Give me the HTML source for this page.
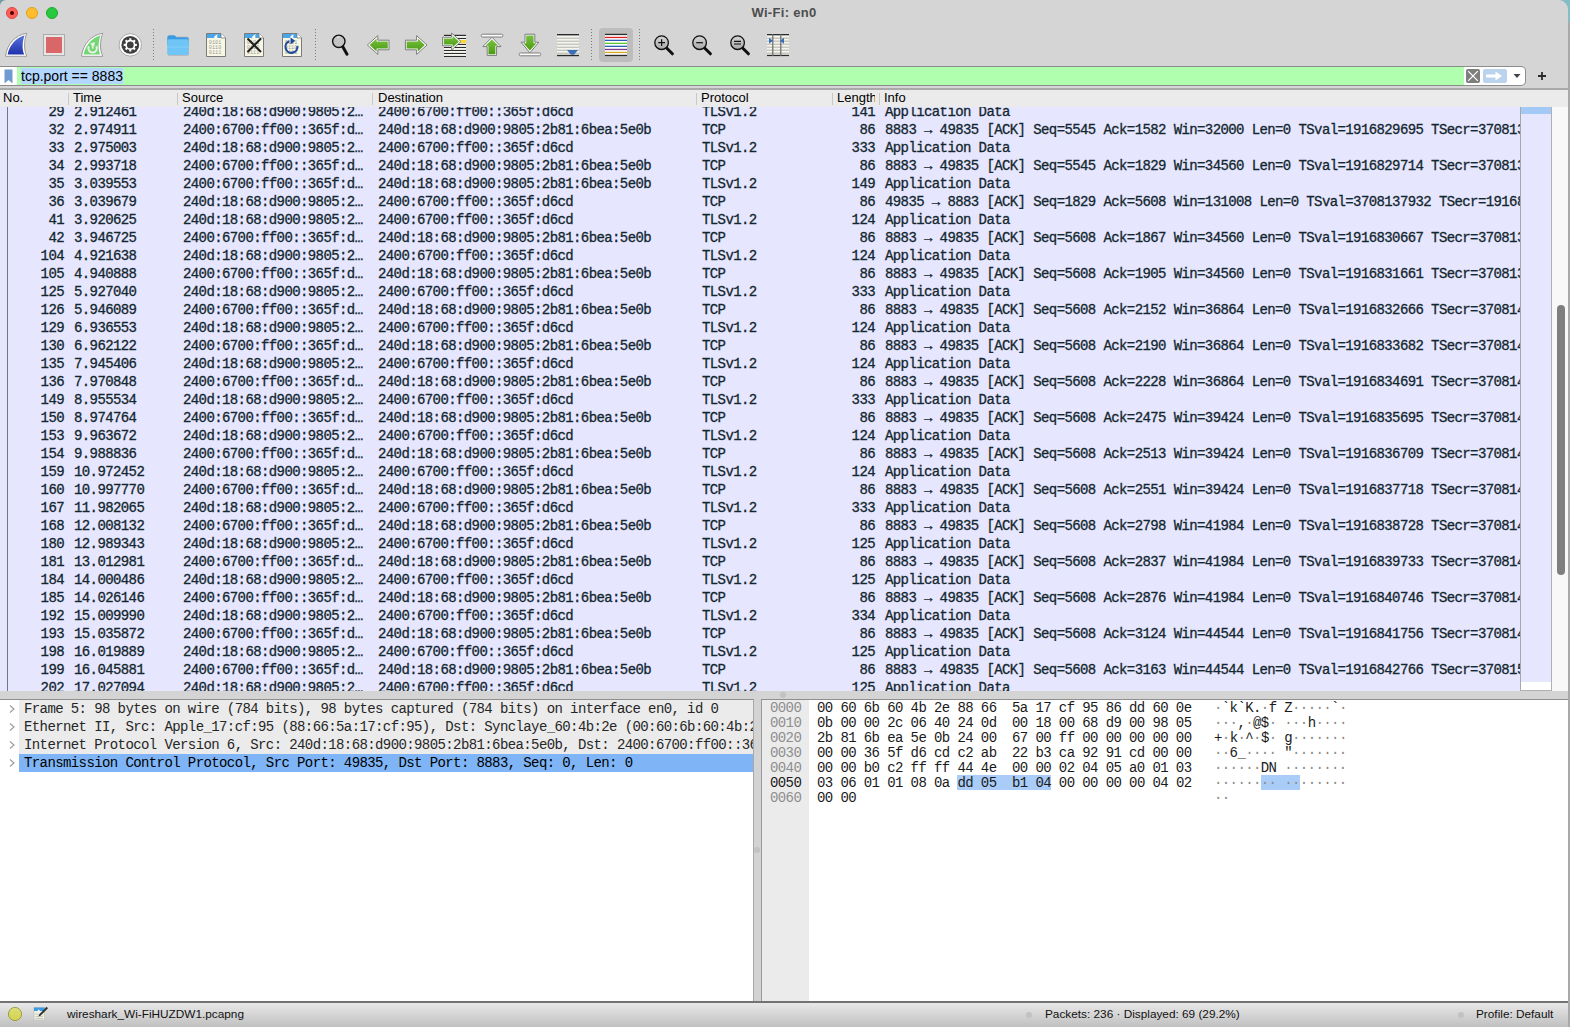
<!DOCTYPE html>
<html><head><meta charset="utf-8">
<style>
*{margin:0;padding:0;box-sizing:border-box}
html,body{width:1570px;height:1027px;overflow:hidden;background:#d5d5d5;font-family:"Liberation Sans",sans-serif}
.abs{position:absolute}
#title{position:absolute;left:0;top:0;width:1570px;height:28px;text-align:center;font-weight:bold;font-size:13px;letter-spacing:0.3px;color:#4d4d4d;line-height:26px;padding-right:2px}
.tl{position:absolute;top:7px;width:12px;height:12px;border-radius:50%}
#tb svg{position:absolute}
.sep{position:absolute;top:29px;width:2px;height:32px;background-image:linear-gradient(#8a8a8a 50%,transparent 50%);background-size:2px 4px;width:1px}
#filter{position:absolute;left:0;top:66px;width:1526px;height:20px;border:1px solid #8c8c8c;border-left:none;border-radius:0 5px 5px 0;background:#fff;overflow:hidden}
#fgreen{position:absolute;left:17px;top:0;width:1447px;height:18px;background:#afffaf}
#ftext{position:absolute;left:21px;top:1px;height:16px;background:#b3d7ff;font-size:14px;line-height:16px;color:#000;padding:0 0 0 0}
#sepline{position:absolute;left:0;top:88px;width:1569px;height:2px;background:#a9a9a9}
#hdr{position:absolute;left:0;top:90px;width:1568px;height:17px;background:#ebebeb;font-size:13px;color:#000}
#hdr span{position:absolute;top:0;line-height:16px}
#hdr i{position:absolute;top:3px;width:1px;height:12px;background:#c8c8c8}
#plist{position:absolute;left:0;top:107px;width:1520px;height:584px;overflow:hidden;background:#fff}
.r{position:absolute;left:0;width:1521px;height:18px;background:#e7e6ff;color:#12272e;font-family:"Liberation Mono",monospace;font-size:14px;letter-spacing:-0.6px;line-height:18px;white-space:pre}
.r span{position:absolute;top:2px;-webkit-text-stroke:0.3px #12272e}
.no{right:1457px;text-align:right}
.tm{left:74px}.sr{left:183px}.ds{left:378px}.pr{left:702px}
.ln{right:646px;text-align:right}
.in{left:885px}
#vline{position:absolute;left:7px;top:107px;width:1px;height:584px;background:#6e7a80}
#mini{position:absolute;left:1520px;top:107px;width:32px;height:584px;background:#fff;border-left:1px solid #a8a8a8;border-right:1px solid #b0b0b0;border-bottom:1px solid #b0b0b0}
#sb{position:absolute;left:1552px;top:107px;width:16px;height:584px;background:#f8f8f8}
#thumb{position:absolute;left:1557px;top:305px;width:8px;height:270px;border-radius:4px;background:#7f7f7f}
#split1{position:absolute;left:0;top:691px;width:1569px;height:8px;background:#d4d4d4}
#detail{position:absolute;left:0;top:699px;width:754px;height:302px;background:#fff;border-top:1px solid #8f8f8f;border-right:1px solid #a8a8a8;overflow:hidden}
.d{position:absolute;left:19px;width:740px;height:18px;background:#ebebeb;font-family:"Liberation Mono",monospace;font-size:14px;letter-spacing:-0.6px;line-height:19px;color:#262626;white-space:pre;padding-left:5px}
.d.sel{background:#7fb5f6;color:#000}
.arr{position:absolute;left:8px;width:8px;height:18px}
#split2{position:absolute;left:754px;top:699px;width:7px;height:302px;background:#d3d3d3}
#hex{position:absolute;left:761px;top:699px;width:808px;height:302px;background:#fff;border-top:1px solid #8f8f8f;border-left:1px solid #9a9a9a;overflow:hidden}
#off{position:absolute;left:0;top:0;width:47px;height:302px;background:#ebebeb}
.h{position:absolute;font-family:"Liberation Mono",monospace;font-size:14px;letter-spacing:-0.6px;line-height:15px;white-space:pre;color:#1a1a1a}
.ho{color:#8e8e8e}
.hl{background:#a9cdf8;display:inline-block;height:14px;line-height:15px;vertical-align:top;box-shadow:0 -1px 0 #a9cdf8}
.dt{font-weight:normal;color:#8c8c8c}
#status{position:absolute;left:0;top:1001px;width:1569px;height:26px;border-top:2px solid #737373;background:linear-gradient(#e8e8e8,#c0c0c0);font-size:12px;color:#111}
</style></head><body>
<div id="title">Wi-Fi: en0</div>
<div class="tl" style="left:6px;background:#fe5f57;border:1px solid #e2463f"><div style="position:absolute;left:3px;top:3px;width:4px;height:4px;border-radius:50%;background:#4d0000"></div></div>
<div class="tl" style="left:26px;background:#febc2e;border:1px solid #e1a116"></div>
<div class="tl" style="left:46px;background:#28c840;border:1px solid #1aab29"></div>

<div id="tb">
<svg style="position:absolute;left:0;top:0" width="800" height="64" viewBox="0 0 800 64">
<defs>
<linearGradient id="gb" x1="0" y1="0" x2="0" y2="1"><stop offset="0" stop-color="#5b72dc"/><stop offset="1" stop-color="#1d32aa"/></linearGradient>
<linearGradient id="gg" x1="0" y1="0" x2="0" y2="1"><stop offset="0" stop-color="#7ac143"/><stop offset="1" stop-color="#4a9a10"/></linearGradient>
<linearGradient id="gm" x1="0" y1="0" x2="0" y2="1"><stop offset="0" stop-color="#d6d6d6"/><stop offset="1" stop-color="#a8a8a8"/></linearGradient>
</defs>
<!-- 1 shark fin blue -->
<path d="M5.5 56.3C7 44 15 35.2 26.8 33.2C24 40 23.6 50 26.8 56.3Z" fill="#fff" stroke="#9a9a9a" stroke-width="1"/>
<path d="M7.6 54.6C9.6 45 16 38 24.6 35.3C22.2 42 21.9 49 24.2 54.6Z" fill="url(#gb)"/>
<!-- 2 stop -->
<rect x="43.5" y="34.5" width="21" height="21" fill="#e6e6e6" stroke="#ababab"/>
<rect x="46" y="37" width="16" height="16" fill="#d96767"/>
<!-- 3 restart fin -->
<path d="M81.5 56.3C83 44 91 35.2 102.8 33.2C100 40 99.6 50 102.8 56.3Z" fill="#fff" stroke="#9a9a9a" stroke-width="1"/>
<path d="M83.6 54.6C85.6 45 92 38 100.6 35.3C98.2 42 97.9 49 100.2 54.6Z" fill="#72d672"/>
<path d="M88.8 46.2A4.3 4.3 0 1 0 96.4 46.2" fill="none" stroke="#ebf0eb" stroke-width="2"/>
<path d="M92.7 48.6V44.2" stroke="#ebf0eb" stroke-width="1.8"/>
<path d="M89.8 43.8L94.8 42L94.2 46.6Z" fill="#ebf0eb"/>
<!-- 4 gear -->
<circle cx="130.3" cy="44.9" r="11.2" fill="#fff" stroke="#a0a0a0" stroke-width="0.9"/>
<circle cx="130.3" cy="44.9" r="8.9" fill="#3e3e3e"/>
<g fill="#fff" transform="translate(130.3 44.9)">
<circle r="5.1"/>
<rect x="-1" y="-6.6" width="2" height="13.2"/>
<rect x="-1" y="-6.6" width="2" height="13.2" transform="rotate(45)"/>
<rect x="-1" y="-6.6" width="2" height="13.2" transform="rotate(90)"/>
<rect x="-1" y="-6.6" width="2" height="13.2" transform="rotate(135)"/>
</g>
<circle cx="130.3" cy="44.9" r="3.4" fill="#3e3e3e"/>
<!-- separators -->
<g stroke="#7a7a7a" stroke-width="1" stroke-dasharray="1 2">
<line x1="153.5" y1="29" x2="153.5" y2="61"/>
<line x1="315.5" y1="29" x2="315.5" y2="61"/>
<line x1="591.5" y1="29" x2="591.5" y2="61"/>
<line x1="639.5" y1="29" x2="639.5" y2="61"/>
</g>
<!-- 5 folder -->
<rect x="167.5" y="36.6" width="21.5" height="19.4" rx="2" fill="#000" opacity="0.12"/>
<path d="M167.3 37.6Q167.3 35.3 169.6 35.3H174.4L176.6 37.3H186.7Q188.7 37.3 188.7 39.6V45H167.3Z" fill="#3b9be2"/>
<rect x="167.3" y="39.2" width="21.4" height="15.8" rx="1.8" fill="#6ec5f6"/>
<rect x="167.3" y="46.5" width="21.4" height="1" fill="#86d0f8"/>
<!-- 6,7,8 doc -->
<g id="doc">
<path d="M206.5 33.5H221L225.5 38V56.5H206.5Z" fill="#f7f7e4" stroke="#7a7a7a" stroke-width="1"/>
<path d="M207 34H220.8L224.9 38.1H207Z" fill="#4aa6e8"/>
<path d="M214 38C214.5 36 216 34.8 218 34.3C217 35.4 217 36.8 217.5 38Z" fill="#fff"/>
<path d="M221 33.5V38H225.5" fill="#fff" stroke="#7a7a7a" stroke-width="0.8"/>
<g fill="#9a9a9a" font-family="Liberation Mono" font-size="5.2"><text x="208.8" y="44">0101</text><text x="208.8" y="49.2">0110</text><text x="208.8" y="54.4">0111</text></g>
</g>
<use href="#doc" x="38"/>
<use href="#doc" x="76"/>
<path d="M247.5 38.5L261 52M261 38.5L247.5 52" stroke="#1d1d1d" stroke-width="2"/>
<path d="M289.3 41.2A6 6 0 1 0 297.4 46" fill="none" stroke="#1f4b9c" stroke-width="2.2"/>
<path d="M290.5 37.6L295.2 40.8L290.6 44.6Z" fill="#1f4b9c"/>
<!-- 9 find -->
<circle cx="338.8" cy="41.3" r="6.2" fill="#c4c4c4" stroke="#101010" stroke-width="1.4"/>
<path d="M337 37.5Q338 36.6 339.5 36.9" stroke="#fff" stroke-width="0.8" fill="none"/>
<line x1="342.8" y1="46.8" x2="347" y2="54.2" stroke="#101010" stroke-width="3" stroke-linecap="round"/>
<!-- 10 left, 11 right -->
<path d="M367.4 45L377.8 35.6V40.2H389V49.8H377.8V54.4Z" fill="#fff" stroke="#7c7c7c" stroke-width="1" stroke-linejoin="round"/>
<path d="M369.6 45L376.6 38.6V41.4H387.8V48.6H376.6V51.4Z" fill="url(#gg)"/>
<path d="M427 45L416.6 35.6V40.2H405.4V49.8H416.6V54.4Z" fill="#fff" stroke="#7c7c7c" stroke-width="1" stroke-linejoin="round"/>
<path d="M424.8 45L417.8 38.6V41.4H406.6V48.6H417.8V51.4Z" fill="url(#gg)"/>
<!-- 12 go to packet -->
<g fill="#2a2a2a"><rect x="444" y="34.8" width="22" height="1.2"/><rect x="444" y="37.8" width="22" height="1.2"/><rect x="444" y="40.8" width="22" height="1.2"/><rect x="444" y="43.8" width="22" height="1.2"/><rect x="444" y="46.8" width="22" height="1.2"/><rect x="444" y="49.8" width="22" height="1.2"/><rect x="444" y="52.8" width="22" height="1.2"/><rect x="444" y="55.8" width="22" height="1.2"/></g>
<g fill="#f4f4f0"><rect x="444" y="36" width="22" height="1.8"/><rect x="444" y="39" width="22" height="1.8"/><rect x="444" y="42" width="22" height="1.8"/><rect x="444" y="45" width="22" height="1.8"/><rect x="444" y="48" width="22" height="1.8"/><rect x="444" y="51" width="22" height="1.8"/><rect x="444" y="54" width="22" height="1.8"/></g>
<rect x="458" y="40" width="8" height="3.2" fill="#f6d83a"/>
<path d="M461 41.5L451.6 33V37.2H442.6V45.8H451.6V50Z" fill="#fff" stroke="#7c7c7c" stroke-width="1" stroke-linejoin="round"/>
<path d="M459 41.5L452.6 35.8V38.4H443.8V44.6H452.6V47.2Z" fill="url(#gg)"/>
<!-- 13 first -->
<rect x="481.3" y="34.2" width="21.6" height="2.8" rx="1.4" fill="#fff" stroke="#7c7c7c" stroke-width="1"/>
<path d="M491.9 37.3L501 46.6H496.6V55.4H487.2V46.6H482.8Z" fill="#fff" stroke="#7c7c7c" stroke-width="1" stroke-linejoin="round"/>
<path d="M491.9 39.6L498.4 45.8H495.4V54.2H488.4V45.8H485.4Z" fill="url(#gg)"/>
<!-- 14 last -->
<rect x="519.1" y="53" width="21.6" height="2.8" rx="1.4" fill="#fff" stroke="#7c7c7c" stroke-width="1"/>
<path d="M529.9 52.8L538.8 42.2H534.8V34.2H525V42.2H521Z" fill="#fff" stroke="#7c7c7c" stroke-width="1" stroke-linejoin="round"/>
<path d="M529.9 50.6L536.4 43.2H533.6V35.4H526.2V43.2H523.4Z" fill="url(#gg)"/>
<!-- 15 autoscroll -->
<g fill="#f4f4f0"><rect x="557" y="35" width="22" height="20"/></g>
<g fill="#c6c6bc"><rect x="557" y="37.6" width="22" height="1.4"/><rect x="557" y="40.6" width="22" height="1.4"/><rect x="557" y="43.6" width="22" height="1.4"/><rect x="557" y="46.6" width="22" height="1.4"/><rect x="557" y="49.6" width="22" height="1.4"/><rect x="557" y="52.6" width="22" height="1.4"/></g>
<rect x="557" y="34" width="22" height="1.4" fill="#2a2a2a"/><rect x="557" y="54.8" width="22" height="1.4" fill="#2a2a2a"/>
<path d="M567 50L578 50L574 54.8H571Z" fill="#3a6fb8"/>
<!-- 16 colorize -->
<rect x="599" y="28" width="34" height="34" rx="4" fill="#bdbdbd"/>
<rect x="605" y="34" width="22" height="22" fill="#fff"/>
<rect x="605" y="33.8" width="22" height="1.3" fill="#2a2a2a"/>
<rect x="605" y="36.8" width="22" height="1.3" fill="#e02020"/>
<rect x="605" y="39.7" width="22" height="1.3" fill="#2c5faf"/>
<rect x="605" y="42.7" width="22" height="1.3" fill="#5cc82a"/>
<rect x="605" y="45.7" width="22" height="1.3" fill="#2c5faf"/>
<rect x="605" y="48.8" width="22" height="1.3" fill="#7a3c8e"/>
<rect x="605" y="51.8" width="22" height="1.3" fill="#d8a818"/>
<rect x="605" y="54.8" width="22" height="1.3" fill="#2a2a2a"/>
<!-- 17-19 zoom -->
<g id="zm">
<line x1="666.6" y1="48" x2="672.4" y2="53.8" stroke="#101010" stroke-width="3" stroke-linecap="round"/>
<circle cx="661.6" cy="42.7" r="6.8" fill="url(#gm)" stroke="#101010" stroke-width="1.3"/>
</g>
<use href="#zm" x="38"/>
<use href="#zm" x="76"/>
<path d="M658.2 42.7H665M661.6 39.3V46.1" stroke="#101010" stroke-width="1.2"/>
<path d="M696.2 42.7H703" stroke="#101010" stroke-width="1.2"/>
<path d="M734 41.4H741M734 44H741" stroke="#101010" stroke-width="1.2"/>
<!-- 20 resize columns -->
<rect x="767" y="34" width="22" height="22" fill="#f4f4f0"/>
<g fill="#bdbdb2"><rect x="767" y="37.6" width="22" height="1.2"/><rect x="767" y="40.6" width="22" height="1.2"/><rect x="767" y="43.6" width="22" height="1.2"/><rect x="767" y="46.6" width="22" height="1.2"/><rect x="767" y="49.6" width="22" height="1.2"/><rect x="767" y="52.6" width="22" height="1.2"/></g>
<rect x="767" y="34" width="22" height="1.3" fill="#2a2a2a"/><rect x="767" y="54.8" width="22" height="1.3" fill="#2a2a2a"/>
<rect x="772.2" y="34" width="1.2" height="22" fill="#6a6a6a"/><rect x="780.2" y="34" width="1.2" height="22" fill="#6a6a6a"/>
<path d="M769 37.8L773 40.8L769 43.8Z" fill="#3a6fb8"/>
<path d="M784 37.8L780 40.8L784 43.8Z" fill="#3a6fb8"/>
</svg>

</div>

<div id="filter"><div id="fgreen"></div>
<svg class="abs" style="left:4px;top:2px" width="9" height="15" viewBox="0 0 9 15"><path d="M0.5 0.5h8v14l-4-3.5-4 3.5z" fill="#6e9bd1"/></svg>
<div id="ftext">tcp.port == 8883</div>
<div style="position:absolute;left:1466px;top:2px;width:14px;height:14px;border-radius:2px;background:#7e7e7e"></div>
<svg class="abs" style="left:1466px;top:2px" width="14" height="14" viewBox="0 0 14 14"><path d="M2.2 2.2L11.8 11.8M11.8 2.2L2.2 11.8" stroke="#fff" stroke-width="1.2"/></svg>
<div style="position:absolute;left:1483px;top:2px;width:24px;height:14px;border-radius:2px;background:#bcd3ee"></div>
<svg class="abs" style="left:1483px;top:2px" width="24" height="14" viewBox="0 0 24 14"><path d="M3 5.5H12.5V2.5L19 7L12.5 11.5V8.5H3Z" fill="#fff"/></svg>
<svg class="abs" style="left:1513px;top:6px" width="8" height="6" viewBox="0 0 8 6"><path d="M0.5 1H7.5L4 5Z" fill="#444"/></svg>
</div>
<svg class="abs" style="left:1536px;top:70px" width="12" height="12" viewBox="0 0 12 12"><path d="M2 6H10M6 2V10" stroke="#2a2a2a" stroke-width="1.8"/></svg>

<div id="sepline"></div>
<div id="hdr">
<span style="left:3px">No.</span><i style="left:68px"></i>
<span style="left:73px">Time</span><i style="left:177px"></i>
<span style="left:182px">Source</span><i style="left:372px"></i>
<span style="left:378px">Destination</span><i style="left:696px"></i>
<span style="left:701px">Protocol</span><i style="left:832px"></i>
<span style="left:837px;width:38px;overflow:hidden;white-space:nowrap">Length</span><i style="left:879px"></i>
<span style="left:884px">Info</span>
</div>

<div id="plist"><div style="position:absolute;left:0;top:-107px;width:1521px;height:800px">
<div class="r" style="top:101px"><span class="no">29</span><span class="tm">2.912461</span><span class="sr">240d:18:68:d900:9805:2…</span><span class="ds">2400:6700:ff00::365f:d6cd</span><span class="pr">TLSv1.2</span><span class="ln">141</span><span class="in">Application Data</span></div>
<div class="r" style="top:119px"><span class="no">32</span><span class="tm">2.974911</span><span class="sr">2400:6700:ff00::365f:d…</span><span class="ds">240d:18:68:d900:9805:2b81:6bea:5e0b</span><span class="pr">TCP</span><span class="ln">86</span><span class="in">8883 → 49835 [ACK] Seq=5545 Ack=1582 Win=32000 Len=0 TSval=1916829695 TSecr=3708137911</span></div>
<div class="r" style="top:137px"><span class="no">33</span><span class="tm">2.975003</span><span class="sr">240d:18:68:d900:9805:2…</span><span class="ds">2400:6700:ff00::365f:d6cd</span><span class="pr">TLSv1.2</span><span class="ln">333</span><span class="in">Application Data</span></div>
<div class="r" style="top:155px"><span class="no">34</span><span class="tm">2.993718</span><span class="sr">2400:6700:ff00::365f:d…</span><span class="ds">240d:18:68:d900:9805:2b81:6bea:5e0b</span><span class="pr">TCP</span><span class="ln">86</span><span class="in">8883 → 49835 [ACK] Seq=5545 Ack=1829 Win=34560 Len=0 TSval=1916829714 TSecr=3708137913</span></div>
<div class="r" style="top:173px"><span class="no">35</span><span class="tm">3.039553</span><span class="sr">2400:6700:ff00::365f:d…</span><span class="ds">240d:18:68:d900:9805:2b81:6bea:5e0b</span><span class="pr">TLSv1.2</span><span class="ln">149</span><span class="in">Application Data</span></div>
<div class="r" style="top:191px"><span class="no">36</span><span class="tm">3.039679</span><span class="sr">240d:18:68:d900:9805:2…</span><span class="ds">2400:6700:ff00::365f:d6cd</span><span class="pr">TCP</span><span class="ln">86</span><span class="in">49835 → 8883 [ACK] Seq=1829 Ack=5608 Win=131008 Len=0 TSval=3708137932 TSecr=1916829714</span></div>
<div class="r" style="top:209px"><span class="no">41</span><span class="tm">3.920625</span><span class="sr">240d:18:68:d900:9805:2…</span><span class="ds">2400:6700:ff00::365f:d6cd</span><span class="pr">TLSv1.2</span><span class="ln">124</span><span class="in">Application Data</span></div>
<div class="r" style="top:227px"><span class="no">42</span><span class="tm">3.946725</span><span class="sr">2400:6700:ff00::365f:d…</span><span class="ds">240d:18:68:d900:9805:2b81:6bea:5e0b</span><span class="pr">TCP</span><span class="ln">86</span><span class="in">8883 → 49835 [ACK] Seq=5608 Ack=1867 Win=34560 Len=0 TSval=1916830667 TSecr=3708138813</span></div>
<div class="r" style="top:245px"><span class="no">104</span><span class="tm">4.921638</span><span class="sr">240d:18:68:d900:9805:2…</span><span class="ds">2400:6700:ff00::365f:d6cd</span><span class="pr">TLSv1.2</span><span class="ln">124</span><span class="in">Application Data</span></div>
<div class="r" style="top:263px"><span class="no">105</span><span class="tm">4.940888</span><span class="sr">2400:6700:ff00::365f:d…</span><span class="ds">240d:18:68:d900:9805:2b81:6bea:5e0b</span><span class="pr">TCP</span><span class="ln">86</span><span class="in">8883 → 49835 [ACK] Seq=5608 Ack=1905 Win=34560 Len=0 TSval=1916831661 TSecr=3708139813</span></div>
<div class="r" style="top:281px"><span class="no">125</span><span class="tm">5.927040</span><span class="sr">240d:18:68:d900:9805:2…</span><span class="ds">2400:6700:ff00::365f:d6cd</span><span class="pr">TLSv1.2</span><span class="ln">333</span><span class="in">Application Data</span></div>
<div class="r" style="top:299px"><span class="no">126</span><span class="tm">5.946089</span><span class="sr">2400:6700:ff00::365f:d…</span><span class="ds">240d:18:68:d900:9805:2b81:6bea:5e0b</span><span class="pr">TCP</span><span class="ln">86</span><span class="in">8883 → 49835 [ACK] Seq=5608 Ack=2152 Win=36864 Len=0 TSval=1916832666 TSecr=3708140813</span></div>
<div class="r" style="top:317px"><span class="no">129</span><span class="tm">6.936553</span><span class="sr">240d:18:68:d900:9805:2…</span><span class="ds">2400:6700:ff00::365f:d6cd</span><span class="pr">TLSv1.2</span><span class="ln">124</span><span class="in">Application Data</span></div>
<div class="r" style="top:335px"><span class="no">130</span><span class="tm">6.962122</span><span class="sr">2400:6700:ff00::365f:d…</span><span class="ds">240d:18:68:d900:9805:2b81:6bea:5e0b</span><span class="pr">TCP</span><span class="ln">86</span><span class="in">8883 → 49835 [ACK] Seq=5608 Ack=2190 Win=36864 Len=0 TSval=1916833682 TSecr=3708141813</span></div>
<div class="r" style="top:353px"><span class="no">135</span><span class="tm">7.945406</span><span class="sr">240d:18:68:d900:9805:2…</span><span class="ds">2400:6700:ff00::365f:d6cd</span><span class="pr">TLSv1.2</span><span class="ln">124</span><span class="in">Application Data</span></div>
<div class="r" style="top:371px"><span class="no">136</span><span class="tm">7.970848</span><span class="sr">2400:6700:ff00::365f:d…</span><span class="ds">240d:18:68:d900:9805:2b81:6bea:5e0b</span><span class="pr">TCP</span><span class="ln">86</span><span class="in">8883 → 49835 [ACK] Seq=5608 Ack=2228 Win=36864 Len=0 TSval=1916834691 TSecr=3708142813</span></div>
<div class="r" style="top:389px"><span class="no">149</span><span class="tm">8.955534</span><span class="sr">240d:18:68:d900:9805:2…</span><span class="ds">2400:6700:ff00::365f:d6cd</span><span class="pr">TLSv1.2</span><span class="ln">333</span><span class="in">Application Data</span></div>
<div class="r" style="top:407px"><span class="no">150</span><span class="tm">8.974764</span><span class="sr">2400:6700:ff00::365f:d…</span><span class="ds">240d:18:68:d900:9805:2b81:6bea:5e0b</span><span class="pr">TCP</span><span class="ln">86</span><span class="in">8883 → 49835 [ACK] Seq=5608 Ack=2475 Win=39424 Len=0 TSval=1916835695 TSecr=3708143813</span></div>
<div class="r" style="top:425px"><span class="no">153</span><span class="tm">9.963672</span><span class="sr">240d:18:68:d900:9805:2…</span><span class="ds">2400:6700:ff00::365f:d6cd</span><span class="pr">TLSv1.2</span><span class="ln">124</span><span class="in">Application Data</span></div>
<div class="r" style="top:443px"><span class="no">154</span><span class="tm">9.988836</span><span class="sr">2400:6700:ff00::365f:d…</span><span class="ds">240d:18:68:d900:9805:2b81:6bea:5e0b</span><span class="pr">TCP</span><span class="ln">86</span><span class="in">8883 → 49835 [ACK] Seq=5608 Ack=2513 Win=39424 Len=0 TSval=1916836709 TSecr=3708144813</span></div>
<div class="r" style="top:461px"><span class="no">159</span><span class="tm">10.972452</span><span class="sr">240d:18:68:d900:9805:2…</span><span class="ds">2400:6700:ff00::365f:d6cd</span><span class="pr">TLSv1.2</span><span class="ln">124</span><span class="in">Application Data</span></div>
<div class="r" style="top:479px"><span class="no">160</span><span class="tm">10.997770</span><span class="sr">2400:6700:ff00::365f:d…</span><span class="ds">240d:18:68:d900:9805:2b81:6bea:5e0b</span><span class="pr">TCP</span><span class="ln">86</span><span class="in">8883 → 49835 [ACK] Seq=5608 Ack=2551 Win=39424 Len=0 TSval=1916837718 TSecr=3708145813</span></div>
<div class="r" style="top:497px"><span class="no">167</span><span class="tm">11.982065</span><span class="sr">240d:18:68:d900:9805:2…</span><span class="ds">2400:6700:ff00::365f:d6cd</span><span class="pr">TLSv1.2</span><span class="ln">333</span><span class="in">Application Data</span></div>
<div class="r" style="top:515px"><span class="no">168</span><span class="tm">12.008132</span><span class="sr">2400:6700:ff00::365f:d…</span><span class="ds">240d:18:68:d900:9805:2b81:6bea:5e0b</span><span class="pr">TCP</span><span class="ln">86</span><span class="in">8883 → 49835 [ACK] Seq=5608 Ack=2798 Win=41984 Len=0 TSval=1916838728 TSecr=3708146813</span></div>
<div class="r" style="top:533px"><span class="no">180</span><span class="tm">12.989343</span><span class="sr">240d:18:68:d900:9805:2…</span><span class="ds">2400:6700:ff00::365f:d6cd</span><span class="pr">TLSv1.2</span><span class="ln">125</span><span class="in">Application Data</span></div>
<div class="r" style="top:551px"><span class="no">181</span><span class="tm">13.012981</span><span class="sr">2400:6700:ff00::365f:d…</span><span class="ds">240d:18:68:d900:9805:2b81:6bea:5e0b</span><span class="pr">TCP</span><span class="ln">86</span><span class="in">8883 → 49835 [ACK] Seq=5608 Ack=2837 Win=41984 Len=0 TSval=1916839733 TSecr=3708147813</span></div>
<div class="r" style="top:569px"><span class="no">184</span><span class="tm">14.000486</span><span class="sr">240d:18:68:d900:9805:2…</span><span class="ds">2400:6700:ff00::365f:d6cd</span><span class="pr">TLSv1.2</span><span class="ln">125</span><span class="in">Application Data</span></div>
<div class="r" style="top:587px"><span class="no">185</span><span class="tm">14.026146</span><span class="sr">2400:6700:ff00::365f:d…</span><span class="ds">240d:18:68:d900:9805:2b81:6bea:5e0b</span><span class="pr">TCP</span><span class="ln">86</span><span class="in">8883 → 49835 [ACK] Seq=5608 Ack=2876 Win=41984 Len=0 TSval=1916840746 TSecr=3708148813</span></div>
<div class="r" style="top:605px"><span class="no">192</span><span class="tm">15.009990</span><span class="sr">240d:18:68:d900:9805:2…</span><span class="ds">2400:6700:ff00::365f:d6cd</span><span class="pr">TLSv1.2</span><span class="ln">334</span><span class="in">Application Data</span></div>
<div class="r" style="top:623px"><span class="no">193</span><span class="tm">15.035872</span><span class="sr">2400:6700:ff00::365f:d…</span><span class="ds">240d:18:68:d900:9805:2b81:6bea:5e0b</span><span class="pr">TCP</span><span class="ln">86</span><span class="in">8883 → 49835 [ACK] Seq=5608 Ack=3124 Win=44544 Len=0 TSval=1916841756 TSecr=3708149813</span></div>
<div class="r" style="top:641px"><span class="no">198</span><span class="tm">16.019889</span><span class="sr">240d:18:68:d900:9805:2…</span><span class="ds">2400:6700:ff00::365f:d6cd</span><span class="pr">TLSv1.2</span><span class="ln">125</span><span class="in">Application Data</span></div>
<div class="r" style="top:659px"><span class="no">199</span><span class="tm">16.045881</span><span class="sr">2400:6700:ff00::365f:d…</span><span class="ds">240d:18:68:d900:9805:2b81:6bea:5e0b</span><span class="pr">TCP</span><span class="ln">86</span><span class="in">8883 → 49835 [ACK] Seq=5608 Ack=3163 Win=44544 Len=0 TSval=1916842766 TSecr=3708150813</span></div>
<div class="r" style="top:677px"><span class="no">202</span><span class="tm">17.027094</span><span class="sr">240d:18:68:d900:9805:2…</span><span class="ds">2400:6700:ff00::365f:d6cd</span><span class="pr">TLSv1.2</span><span class="ln">125</span><span class="in">Application Data</span></div>
</div></div>
<div id="vline"></div>
<div id="mini"><div style="position:absolute;left:0;top:0;width:30px;height:575px;background:#e7e6ff"></div><div style="position:absolute;left:0;top:0;width:30px;height:7px;background:#a3c9f7"></div></div>
<div id="sb"></div>
<div id="thumb"></div>

<div id="split1"></div>
<div id="detail">
<svg class="arr" style="top:0px" viewBox="0 0 8 18"><path d="M2 5.5l4 3.5-4 3.5" fill="none" stroke="#9a9a9a" stroke-width="1.1"/></svg>
<div class="d" style="top:0px">Frame 5: 98 bytes on wire (784 bits), 98 bytes captured (784 bits) on interface en0, id 0</div>
<svg class="arr" style="top:18px" viewBox="0 0 8 18"><path d="M2 5.5l4 3.5-4 3.5" fill="none" stroke="#9a9a9a" stroke-width="1.1"/></svg>
<div class="d" style="top:18px">Ethernet II, Src: Apple_17:cf:95 (88:66:5a:17:cf:95), Dst: Synclaye_60:4b:2e (00:60:6b:60:4b:2e)</div>
<svg class="arr" style="top:36px" viewBox="0 0 8 18"><path d="M2 5.5l4 3.5-4 3.5" fill="none" stroke="#9a9a9a" stroke-width="1.1"/></svg>
<div class="d" style="top:36px">Internet Protocol Version 6, Src: 240d:18:68:d900:9805:2b81:6bea:5e0b, Dst: 2400:6700:ff00::365f:d6cd</div>
<svg class="arr" style="top:54px" viewBox="0 0 8 18"><path d="M2 5.5l4 3.5-4 3.5" fill="none" stroke="#9a9a9a" stroke-width="1.1"/></svg>
<div class="d sel" style="top:54px">Transmission Control Protocol, Src Port: 49835, Dst Port: 8883, Seq: 0, Len: 0</div>
</div>
<div id="split2"></div>
<div id="hex"><div id="off"></div>
<div class="h ho" style="left:8px;top:1px">0000</div>
<div class="h" style="left:55px;top:1px">00 60 6b 60 4b 2e 88 66  5a 17 cf 95 86 dd 60 0e</div>
<div class="h" style="left:452px;top:1px"><b class="dt">·</b>`k`K.<b class="dt">·</b>f Z<b class="dt">·····</b>`<b class="dt">·</b></div>
<div class="h ho" style="left:8px;top:16px">0010</div>
<div class="h" style="left:55px;top:16px">0b 00 00 2c 06 40 24 0d  00 18 00 68 d9 00 98 05</div>
<div class="h" style="left:452px;top:16px"><b class="dt">···</b>,<b class="dt">·</b>@$<b class="dt">·</b> <b class="dt">···</b>h<b class="dt">····</b></div>
<div class="h ho" style="left:8px;top:31px">0020</div>
<div class="h" style="left:55px;top:31px">2b 81 6b ea 5e 0b 24 00  67 00 ff 00 00 00 00 00</div>
<div class="h" style="left:452px;top:31px">+<b class="dt">·</b>k<b class="dt">·</b>^<b class="dt">·</b>$<b class="dt">·</b> g<b class="dt">·······</b></div>
<div class="h ho" style="left:8px;top:46px">0030</div>
<div class="h" style="left:55px;top:46px">00 00 36 5f d6 cd c2 ab  22 b3 ca 92 91 cd 00 00</div>
<div class="h" style="left:452px;top:46px"><b class="dt">··</b>6_<b class="dt">····</b> &quot;<b class="dt">·······</b></div>
<div class="h ho" style="left:8px;top:61px">0040</div>
<div class="h" style="left:55px;top:61px">00 00 b0 c2 ff ff 44 4e  00 00 02 04 05 a0 01 03</div>
<div class="h" style="left:452px;top:61px"><b class="dt">······</b>DN <b class="dt">········</b></div>
<div class="h" style="left:8px;top:76px">0050</div>
<div class="h" style="left:55px;top:76px">03 06 01 01 08 0a <span class="hl">dd 05  b1 04</span> 00 00 00 00 04 02</div>
<div class="h" style="left:452px;top:76px"><b class="dt">······</b><span class="hl"><b class="dt">··</b> <b class="dt">··</b></span><b class="dt">······</b></div>
<div class="h ho" style="left:8px;top:91px">0060</div>
<div class="h" style="left:55px;top:91px">00 00</div>
<div class="h" style="left:452px;top:91px"><b class="dt">··</b></div>
</div>

<div id="status">
<svg style="position:absolute;left:0;top:-2px" width="60" height="26" viewBox="0 0 60 26">
<defs><linearGradient id="gy" x1="0" y1="0" x2="0" y2="1"><stop offset="0" stop-color="#dede7a"/><stop offset="1" stop-color="#d2d24c"/></linearGradient></defs>
<circle cx="15" cy="13" r="6.6" fill="url(#gy)" stroke="#8e8e3a" stroke-width="0.8"/>
<rect x="34" y="6.5" width="10.5" height="12.5" fill="#eeeee4" stroke="#bdbdb0" stroke-width="0.6"/>
<rect x="34" y="6.5" width="10.5" height="3.5" fill="#3c9be0"/>
<path d="M37 10.5L39 8.2L40 10.5Z" fill="#fff"/>
<path d="M46.5 5.8L48 7.3L40.5 14.8L38.3 15.7L39.1 13.4Z" fill="#333"/>
<g stroke="#b0b0a8" stroke-width="0.6"><line x1="35.5" y1="13" x2="38" y2="13"/><line x1="35.5" y1="15.5" x2="43" y2="15.5"/><line x1="35.5" y1="17.5" x2="43" y2="17.5"/></g>
</svg>
<span style="position:absolute;left:67px;top:4px;font-size:11.8px;line-height:14px">wireshark_Wi-FiHUZDW1.pcapng</span>
<div style="position:absolute;left:1026px;top:9px;width:6px;height:6px;border-radius:50%;background:#c2c2c2"></div>
<span style="position:absolute;left:1045px;top:4px;font-size:11.8px;line-height:14px">Packets: 236 · Displayed: 69 (29.2%)</span>
<div style="position:absolute;left:1458px;top:9px;width:6px;height:6px;border-radius:50%;background:#c2c2c2"></div>
<span style="position:absolute;left:1476px;top:4px;font-size:11.8px;line-height:14px">Profile: Default</span>

</div>
<div style="position:absolute;left:1568px;top:0;width:2px;height:1027px;background:#a9a9a9"></div>
<div style="position:absolute;left:780px;top:692px;width:6px;height:6px;border-radius:50%;background:#c2c2c2"></div>
<div style="position:absolute;left:754px;top:847px;width:6px;height:6px;border-radius:50%;background:#c2c2c2"></div>
<svg style="position:absolute;left:0;top:0" width="12" height="12" viewBox="0 0 12 12"><path d="M0 0H6A6 6 0 0 0 0 6Z" fill="#6f9ea2"/></svg>
<svg style="position:absolute;left:1558px;top:0" width="12" height="24" viewBox="0 0 12 24"><path d="M2 0H12V22H10V10A10 10 0 0 0 2 0Z" fill="#86bcc6"/></svg>
</body></html>
